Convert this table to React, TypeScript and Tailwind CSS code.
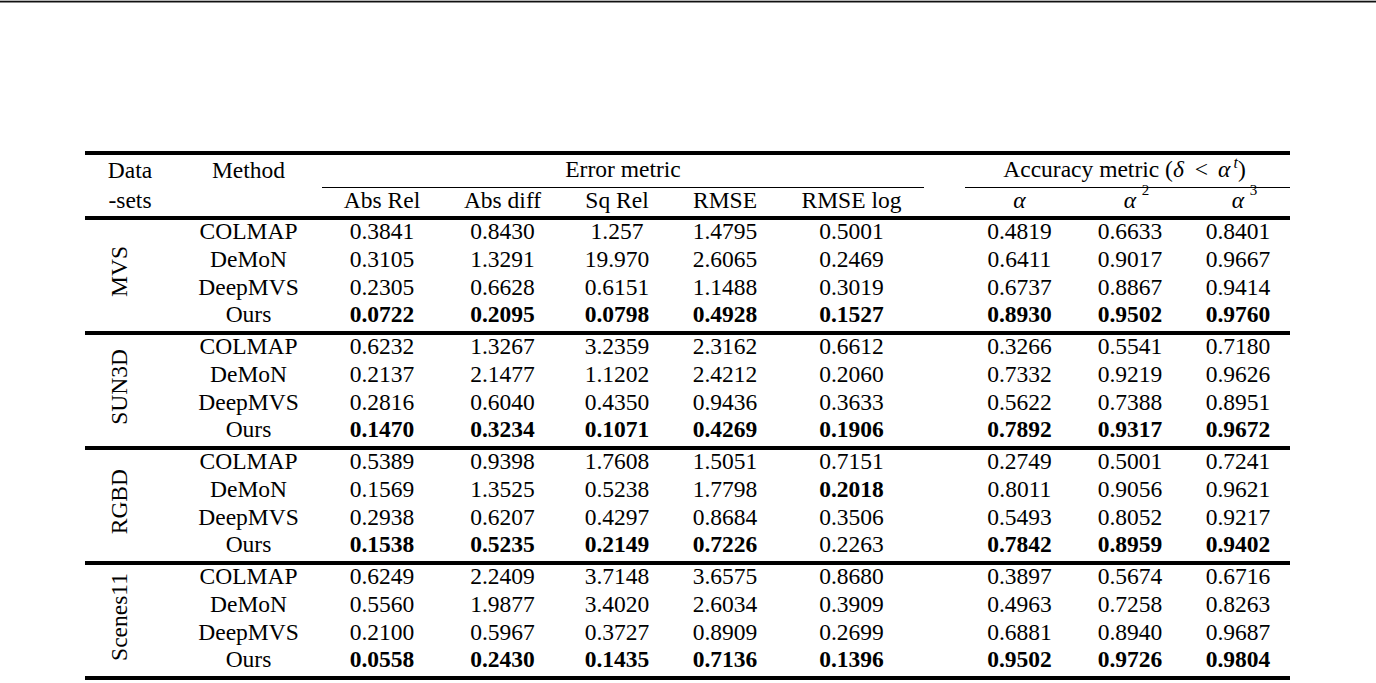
import React from "react";

const COLS =
  "grid grid-cols-[90px_147px_120px_121px_108px_108px_145px_41px_109px_112px_104px]";

type Block = { name: string; rows: [string, string[]][] };

const blocks: Block[] = [
  {
    name: "MVS",
    rows: [
      ["COLMAP", ["0.3841", "0.8430", "1.257", "1.4795", "0.5001", "0.4819", "0.6633", "0.8401"]],
      ["DeMoN", ["0.3105", "1.3291", "19.970", "2.6065", "0.2469", "0.6411", "0.9017", "0.9667"]],
      ["DeepMVS", ["0.2305", "0.6628", "0.6151", "1.1488", "0.3019", "0.6737", "0.8867", "0.9414"]],
      ["Ours", ["*0.0722", "*0.2095", "*0.0798", "*0.4928", "*0.1527", "*0.8930", "*0.9502", "*0.9760"]],
    ],
  },
  {
    name: "SUN3D",
    rows: [
      ["COLMAP", ["0.6232", "1.3267", "3.2359", "2.3162", "0.6612", "0.3266", "0.5541", "0.7180"]],
      ["DeMoN", ["0.2137", "2.1477", "1.1202", "2.4212", "0.2060", "0.7332", "0.9219", "0.9626"]],
      ["DeepMVS", ["0.2816", "0.6040", "0.4350", "0.9436", "0.3633", "0.5622", "0.7388", "0.8951"]],
      ["Ours", ["*0.1470", "*0.3234", "*0.1071", "*0.4269", "*0.1906", "*0.7892", "*0.9317", "*0.9672"]],
    ],
  },
  {
    name: "RGBD",
    rows: [
      ["COLMAP", ["0.5389", "0.9398", "1.7608", "1.5051", "0.7151", "0.2749", "0.5001", "0.7241"]],
      ["DeMoN", ["0.1569", "1.3525", "0.5238", "1.7798", "*0.2018", "0.8011", "0.9056", "0.9621"]],
      ["DeepMVS", ["0.2938", "0.6207", "0.4297", "0.8684", "0.3506", "0.5493", "0.8052", "0.9217"]],
      ["Ours", ["*0.1538", "*0.5235", "*0.2149", "*0.7226", "0.2263", "*0.7842", "*0.8959", "*0.9402"]],
    ],
  },
  {
    name: "Scenes11",
    rows: [
      ["COLMAP", ["0.6249", "2.2409", "3.7148", "3.6575", "0.8680", "0.3897", "0.5674", "0.6716"]],
      ["DeMoN", ["0.5560", "1.9877", "3.4020", "2.6034", "0.3909", "0.4963", "0.7258", "0.8263"]],
      ["DeepMVS", ["0.2100", "0.5967", "0.3727", "0.8909", "0.2699", "0.6881", "0.8940", "0.9687"]],
      ["Ours", ["*0.0558", "*0.2430", "*0.1435", "*0.7136", "*0.1396", "*0.9502", "*0.9726", "*0.9804"]],
    ],
  },
];

function Val({ v }: { v: string }) {
  const bold = v.startsWith("*");
  return (
    <div className="h-[27.75px] flex items-center justify-center pb-[4px]">
      <span className={bold ? "font-bold" : ""}>{bold ? v.slice(1) : v}</span>
    </div>
  );
}

function BlockView({ b }: { b: Block }) {
  return (
    <div className={COLS}>
      <div className="row-span-4 flex items-center justify-center pr-[20px] pb-[8px]">
        <span className="[writing-mode:vertical-rl] rotate-180 whitespace-nowrap">{b.name}</span>
      </div>
      {b.rows.map(([m, vals], i) => (
        <React.Fragment key={i}>
          <div className="h-[27.75px] flex items-center justify-center pb-[4px]">{m}</div>
          {vals.slice(0, 5).map((v, j) => (
            <Val key={j} v={v} />
          ))}
          <div />
          {vals.slice(5).map((v, j) => (
            <Val key={"a" + j} v={v} />
          ))}
        </React.Fragment>
      ))}
    </div>
  );
}

function Alpha({ exp }: { exp?: string }) {
  return (
    <span className="relative">
      <i>α</i>
      {exp && (
        <span className="absolute left-[18px] -top-[6px] text-[15px] leading-none">{exp}</span>
      )}
    </span>
  );
}

export default function App() {
  return (
    <div className="w-[1376px] h-[683px] bg-white text-black font-['Liberation_Serif','Times_New_Roman',serif] text-[23.5px] leading-none overflow-hidden">
      <div className="h-px bg-[#b5b5b5]" />
      <div className="h-px bg-[#111]" />
      <div className="h-px bg-[#8a8a8a]" />
      <div className="ml-[85px] mt-[148px] w-[1205px]">
        <div className="h-[4px] bg-black" />
        <div className={COLS}>
          <div className="h-[33px] flex items-center justify-center pb-[2px]">Data</div>
          <div className="h-[33px] flex items-center justify-center pb-[2px]">Method</div>
          <div className="col-span-5 h-[33px] flex items-center justify-center border-b border-black pb-[2px]">
            Error metric
          </div>
          <div />
          <div className="col-span-3 h-[33px] flex items-center justify-center border-b border-black whitespace-pre pb-[2px]">
            <span className="pr-[6px]">
              Accuracy metric (<i>δ</i>
              <span className="inline-block w-[11px]" />&lt;
              <span className="inline-block w-[10px]" />
              <i>α</i>
              <i className="relative -top-[9px] ml-[3px] text-[16px]">t</i>)
            </span>
          </div>
          <div className="h-[28px] flex items-center justify-center pb-[2px]">-sets</div>
          <div />
          <div className="h-[28px] flex items-center justify-center pb-[2px]">Abs Rel</div>
          <div className="h-[28px] flex items-center justify-center pb-[2px]">Abs diff</div>
          <div className="h-[28px] flex items-center justify-center pb-[2px]">Sq Rel</div>
          <div className="h-[28px] flex items-center justify-center pb-[2px]">RMSE</div>
          <div className="h-[28px] flex items-center justify-center pb-[2px]">RMSE log</div>
          <div />
          <div className="h-[28px] flex items-center justify-center pb-[2px]">
            <Alpha />
          </div>
          <div className="h-[28px] flex items-center justify-center pb-[2px]">
            <Alpha exp="2" />
          </div>
          <div className="h-[28px] flex items-center justify-center pb-[2px]">
            <Alpha exp="3" />
          </div>
        </div>
        <div className="h-[4px] bg-black" />
        {blocks.map((b) => (
          <React.Fragment key={b.name}>
            <BlockView b={b} />
            <div className="h-[4px] bg-black" />
          </React.Fragment>
        ))}
      </div>
    </div>
  );
}
